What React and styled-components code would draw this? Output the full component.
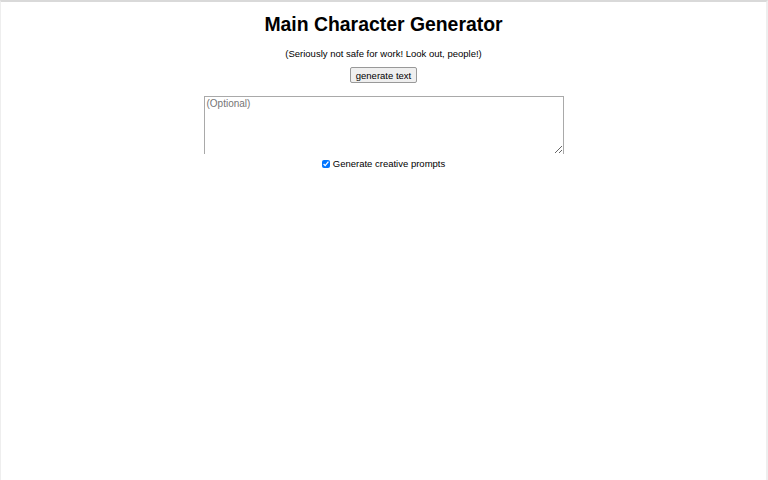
import styled, { createGlobalStyle } from "styled-components";

const GlobalStyle = createGlobalStyle`
  html, body {
    margin: 0;
    padding: 0;
    background: #fff;
  }
  body {
    font-family: "Liberation Sans", Arial, sans-serif;
    color: #000;
  }
`;

const Frame = styled.div`
  box-sizing: border-box;
  width: 768px;
  height: 480px;
  border-top: 2px solid #d9d9d9;
  border-left: 1px solid #eeeeee;
  border-right: 2px solid #eeeeee;
  display: flex;
  flex-direction: column;
  align-items: center;
`;

const Title = styled.h1`
  margin: 11px 0 0;
  font-size: 19.4px;
  font-weight: bold;
  line-height: 23px;
`;

const Subtitle = styled.p`
  margin: 12px 0 0;
  font-size: 9.5px;
  line-height: 12px;
`;

const Button = styled.button`
  margin-top: 7px;
  height: 16px;
  padding: 0 5px;
  font-family: "Liberation Sans", Arial, sans-serif;
  font-size: 9.5px;
  line-height: 13px;
  color: #000;
  background: #efefef;
  border: 1px solid #999;
  border-radius: 2px;
`;

const Prompt = styled.textarea`
  box-sizing: border-box;
  margin-top: 13px;
  width: 360px;
  height: 58px;
  padding: 1px 2px;
  font-family: "Liberation Sans", Arial, sans-serif;
  font-size: 10px;
  border: 1px solid #a9a9a9;
  border-bottom: none;
  border-radius: 0;
  resize: both;
  outline: none;
  &::placeholder {
    color: #757575;
  }
`;

const Option = styled.label`
  margin-top: 4px;
  display: flex;
  align-items: center;
  gap: 3px;
  font-size: 9.5px;
  line-height: 12px;
`;

const Check = styled.input`
  margin: 0;
  width: 8px;
  height: 8px;
  accent-color: #0075ff;
`;

export default function App() {
  return (
    <>
      <GlobalStyle />
      <Frame>
        <Title>Main Character Generator</Title>
        <Subtitle>(Seriously not safe for work! Look out, people!)</Subtitle>
        <Button type="button">generate text</Button>
        <Prompt placeholder="(Optional)" />
        <Option>
          <Check type="checkbox" defaultChecked />
          Generate creative prompts
        </Option>
      </Frame>
    </>
  );
}
